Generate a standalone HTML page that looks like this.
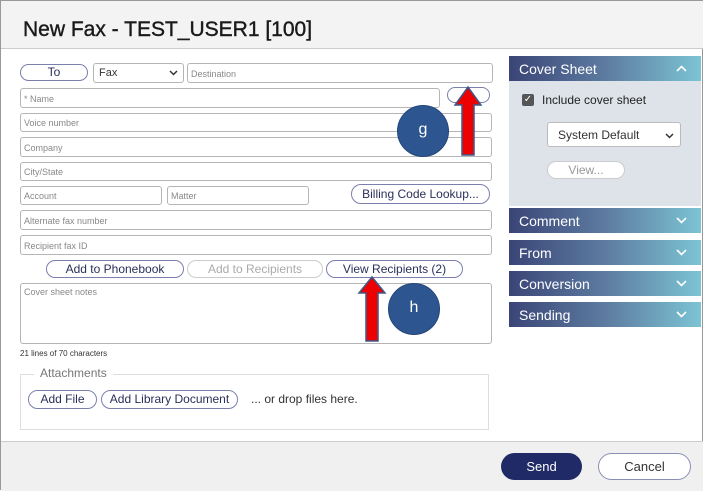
<!DOCTYPE html><html><head><style>
*{box-sizing:border-box;margin:0;padding:0}
body{width:703px;height:490px;position:relative;background:#fff;font-family:"Liberation Sans",sans-serif;overflow:hidden;border:1px solid #999}
.a{position:absolute}
.f{position:absolute;border:1px solid #b5b5b5;border-radius:3px;font-size:9px;color:#888;padding:3px 3px;background:#fff}
.b{position:absolute;border:1px solid #7a7fae;border-radius:10px;font-size:12px;color:#2a2f5a;text-align:center;background:#fff}
.h{position:absolute;left:508px;width:192px;height:25px;background:linear-gradient(90deg,#3a4577,#5d7ba0 50%,#7cc4d4);color:#fff;font-size:14px;padding:5px 10px}
.h svg{position:absolute;right:14px;top:9px}
.c{position:absolute;width:52px;height:52px;border-radius:50%;background:#2d5690;border:1px solid #24467a;color:#fff;font-size:16px;text-align:center;line-height:48px}
</style></head><body>
<div class="a" style="left:0;top:0;width:703px;height:48px;background:#f3f3f3;border-bottom:1px solid #ccc"></div>
<div class="a" style="left:22px;top:17px;font-size:21px;color:#1a1a1a;-webkit-text-stroke:0.4px #1a1a1a">New Fax - TEST_USER1 [100]</div>
<div class="b" style="left:19px;top:63px;width:68px;height:17px;line-height:15px">To</div>
<div class="f" style="left:92px;top:62px;width:91px;height:20px;color:#333;font-size:11px;padding:3px 5px">Fax<svg style="position:absolute;right:5px;top:6px" width="9" height="6"><path d="M1 1l3.5 3.5L8 1" stroke="#333" stroke-width="1.5" fill="none"/></svg></div>
<div class="f" style="left:186px;top:62px;width:306px;height:20px;padding-top:5px">Destination</div>
<div class="f" style="left:19px;top:87px;width:420px;height:20px;padding-top:5px">* Name</div>
<div class="b" style="left:446px;top:86px;width:43px;height:16px"></div>
<div class="f" style="left:19px;top:112px;width:472px;height:19px;padding-top:4px">Voice number</div>
<div class="f" style="left:19px;top:136px;width:472px;height:20px;padding-top:5px">Company</div>
<div class="f" style="left:19px;top:161px;width:472px;height:19px;padding-top:4px">City/State</div>
<div class="f" style="left:19px;top:185px;width:142px;height:19px;padding-top:4px">Account</div>
<div class="f" style="left:166px;top:185px;width:142px;height:19px;padding-top:4px">Matter</div>
<div class="b" style="left:350px;top:183px;width:139px;height:20px;line-height:18px">Billing Code Lookup...</div>
<div class="f" style="left:19px;top:209px;width:472px;height:20px;padding-top:5px">Alternate fax number</div>
<div class="f" style="left:19px;top:234px;width:472px;height:20px;padding-top:5px">Recipient fax ID</div>
<div class="b" style="left:45px;top:259px;width:138px;height:18px;line-height:16px">Add to Phonebook</div>
<div class="b" style="left:186px;top:259px;width:136px;height:18px;line-height:16px;color:#aaa;border-color:#ccc">Add to Recipients</div>
<div class="b" style="left:325px;top:259px;width:137px;height:18px;line-height:16px">View Recipients (2)</div>
<div class="f" style="left:19px;top:282px;width:472px;height:61px">Cover sheet notes</div>
<div class="a" style="left:19px;top:348px;font-size:8px;color:#333">21 lines of 70 characters</div>
<div class="a" style="left:19px;top:373px;width:469px;height:56px;border:1px solid #ddd"></div>
<div class="a" style="left:33px;top:365px;font-size:12px;color:#777;background:#fff;padding:0 6px">Attachments</div>
<div class="b" style="left:27px;top:389px;width:69px;height:19px;line-height:17px">Add File</div>
<div class="b" style="left:100px;top:389px;width:137px;height:19px;line-height:17px">Add Library Document</div>
<div class="a" style="left:250px;top:391px;font-size:12px;color:#333">... or drop files here.</div>
<div class="a" style="left:508px;top:55px;width:192px;height:150px;background:#dde3e8"></div>
<div class="h" style="top:55px">Cover Sheet<svg width="11" height="7"><path d="M1 6l4.5-4.5L10 6" stroke="#fff" stroke-width="1.6" fill="none"/></svg></div>
<div class="a" style="left:521px;top:93px;width:12px;height:12px;background:#555;border-radius:2px;color:#fff;font-size:10px;text-align:center;line-height:12px">✓</div>
<div class="a" style="left:541px;top:92px;font-size:12px;color:#222">Include cover sheet</div>
<div class="a" style="left:546px;top:121px;width:134px;height:25px;background:#fff;border:1px solid #bbb;border-radius:3px;font-size:12px;color:#333;padding:5px 10px">System Default<svg style="position:absolute;right:6px;top:10px" width="9" height="6"><path d="M1 1l3.5 3.5L8 1" stroke="#333" stroke-width="1.5" fill="none"/></svg></div>
<div class="b" style="left:546px;top:160px;width:78px;height:18px;line-height:16px;color:#999;border-color:#ccc">View...</div>
<div class="h" style="top:207px">Comment<svg width="11" height="7"><path d="M1 1l4.5 4.5L10 1" stroke="#fff" stroke-width="1.6" fill="none"/></svg></div>
<div class="h" style="top:239px">From<svg width="11" height="7"><path d="M1 1l4.5 4.5L10 1" stroke="#fff" stroke-width="1.6" fill="none"/></svg></div>
<div class="h" style="top:270px">Conversion<svg width="11" height="7"><path d="M1 1l4.5 4.5L10 1" stroke="#fff" stroke-width="1.6" fill="none"/></svg></div>
<div class="h" style="top:301px">Sending<svg width="11" height="7"><path d="M1 1l4.5 4.5L10 1" stroke="#fff" stroke-width="1.6" fill="none"/></svg></div>
<div class="a" style="left:0;top:440px;width:703px;height:50px;background:#f0f0f0;border-top:1px solid #ccc"></div>
<div class="a" style="left:500px;top:452px;width:81px;height:27px;border-radius:14px;background:#1f2a66;color:#fff;font-size:13px;text-align:center;line-height:27px">Send</div>
<div class="a" style="left:597px;top:452px;width:93px;height:27px;border-radius:14px;background:#fff;border:1px solid #8a8fb5;color:#333;font-size:13px;text-align:center;line-height:25px">Cancel</div>
<div class="c" style="left:396px;top:104px">g</div>
<div class="c" style="left:387px;top:282px">h</div>
<svg class="a" style="left:452px;top:84px" width="30" height="72"><path d="M9 70V20H2L15 2 28 20H21V70Z" fill="#e00" stroke="#3a5a8a" stroke-width="1.5"/></svg>
<svg class="a" style="left:356px;top:274px" width="30" height="68"><path d="M9 66V18H2L15 2 28 18H21V66Z" fill="#e00" stroke="#3a5a8a" stroke-width="1.5"/></svg>
</body></html>
